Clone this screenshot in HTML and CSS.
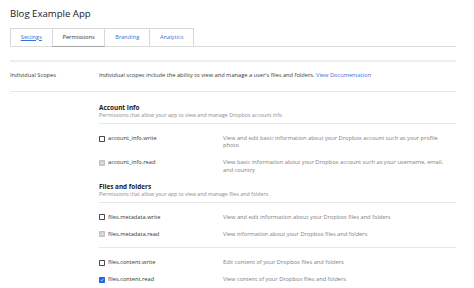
FILE: index.html
```html
<!DOCTYPE html>
<html lang="en">
<head>
<meta charset="utf-8">
<title>Blog Example App</title>
<link rel="stylesheet" href="styles.css">
</head>
<body>
<div class="page">
  <h1 class="title">Blog Example App</h1>
  <nav class="tabs">
    <a class="tab link underline" href="#">Settings</a>
    <span class="tab active">Permissions</span>
    <a class="tab link" href="#">Branding</a>
    <a class="tab link" href="#">Analytics</a>
  </nav>
  <section class="scopes">
    <div class="scopes-head">
      <div class="label-col">Individual Scopes</div>
      <div class="main-col">Individual scopes include the ability to view and manage a user's files and folders. <a class="doc" href="#">View Documentation</a></div>
    </div>
    <div class="scopes-body">
      <div class="group">
        <div class="group-head">
          <h2>Account Info</h2>
          <p>Permissions that allow your app to view and manage Dropbox account info</p>
        </div>
        <div class="sub">
          <div class="row">
            <label class="perm"><span class="cb"></span>account_info.write</label>
            <div class="desc">View and edit basic information about your Dropbox account such as your profile photo</div>
          </div>
          <div class="row">
            <label class="perm"><span class="cb dis"><svg viewBox="0 0 10 10"><path d="M2.2 5.2 L4.2 7.2 L7.9 2.9"/></svg></span>account_info.read</label>
            <div class="desc">View basic information about your Dropbox account such as your username, email, and country</div>
          </div>
        </div>
      </div>
      <div class="group">
        <div class="group-head">
          <h2>Files and folders</h2>
          <p>Permissions that allow your app to view and manage files and folders</p>
        </div>
        <div class="sub">
          <div class="row">
            <label class="perm"><span class="cb"></span>files.metadata.write</label>
            <div class="desc">View and edit information about your Dropbox files and folders</div>
          </div>
          <div class="row">
            <label class="perm"><span class="cb dis"><svg viewBox="0 0 10 10"><path d="M2.2 5.2 L4.2 7.2 L7.9 2.9"/></svg></span>files.metadata.read</label>
            <div class="desc">View information about your Dropbox files and folders</div>
          </div>
        </div>
        <div class="sub">
          <div class="row">
            <label class="perm"><span class="cb"></span>files.content.write</label>
            <div class="desc">Edit content of your Dropbox files and folders</div>
          </div>
          <div class="row">
            <label class="perm"><span class="cb on"><svg viewBox="0 0 10 10"><path d="M2.2 5.2 L4.2 7.2 L7.9 2.9"/></svg></span>files.content.read</label>
            <div class="desc">View content of your Dropbox files and folders</div>
          </div>
        </div>
      </div>
    </div>
  </section>
</div>
</body>
</html>
```

FILE: styles.css
```css
html, body {
  margin: 0;
  background: #ffffff;
}
body {
  font-family: "Open Sans", "Liberation Sans", sans-serif;
  color: #3a3a3a;
}
.page {
  padding: 7px 18px 0 10px;
}
.title {
  margin: 0;
  font-size: 9.6px;
  line-height: 13px;
  font-weight: 400;
  color: #1e1919;
}
.tabs {
  display: flex;
  margin-top: 8px;
  border-bottom: 1px solid #dcdcdc;
}
.tab {
  font-size: 5.7px;
  line-height: 7.4px;
  padding: 4.8px 9.8px;
  border: 1px solid #d8d8d8;
  border-bottom: 0;
  margin-right: -1px;
  background: #fff;
  text-decoration: none;
}
.tab.link {
  color: #3a6fd6;
}
.tab.underline {
  text-decoration: underline;
}
.tab.active {
  color: #333;
  border-bottom: 1px solid #a4a4a4;
  margin-bottom: -1px;
}
.scopes {
  margin-top: 13px;
  border-top: 2px solid #eeeeee;
}
.scopes-head {
  display: flex;
  padding: 10px 0 11.5px;
  border-bottom: 1px solid #e6e6e6;
  font-size: 5.7px;
  line-height: 7.4px;
  color: #3a3a3a;
}
.label-col {
  width: 89px;
  flex: none;
}
.main-col {
  flex: 1;
}
.doc {
  color: #3a6fd6;
  text-decoration: none;
}
.scopes-body {
  padding: 11.8px 0 0 89px;
}
.group-head {
  padding-bottom: 3.5px;
  border-bottom: 1px solid #e8e8e8;
}
.group-head h2 {
  margin: 0;
  font-size: 6.4px;
  line-height: 8.5px;
  font-weight: 700;
  color: #1e1919;
}
.group-head p {
  margin: 0;
  font-size: 5.25px;
  line-height: 7px;
  color: #8c8c8c;
}
.sub {
  display: flex;
  flex-direction: column;
  gap: 9.6px;
  padding: 11.2px 0 8.5px;
}
.sub + .sub {
  border-top: 1px solid #e8e8e8;
}
.row {
  display: grid;
  grid-template-columns: 124px 1fr;
  font-size: 5.7px;
  line-height: 7.4px;
}
.perm {
  display: flex;
  align-items: center;
  gap: 3px;
  height: 7.4px;
  color: #333;
}
.desc {
  color: #808080;
  padding-right: 8px;
}
.cb {
  box-sizing: border-box;
  width: 6px;
  height: 6px;
  flex: none;
  border: 0.8px solid #4a4a4a;
  border-radius: 0.8px;
  background: #fff;
  display: inline-flex;
  align-items: center;
  justify-content: center;
}
.cb svg {
  width: 100%;
  height: 100%;
  display: block;
}
.cb svg path {
  fill: none;
  stroke: #fff;
  stroke-width: 1.7;
  stroke-linecap: round;
  stroke-linejoin: round;
}
.cb.dis {
  background: #cdcdcd;
  border-color: #c2c2c2;
}
.cb.on {
  background: #1f66e0;
  border-color: #1f66e0;
}
```
